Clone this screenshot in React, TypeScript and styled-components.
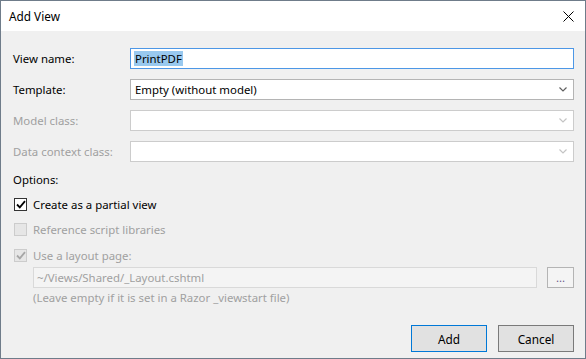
import React from 'react'
import styled, { createGlobalStyle } from 'styled-components'

const GlobalStyle = createGlobalStyle`
  html, body {
    margin: 0;
    padding: 0;
    background: #ffffff;
  }
  * {
    box-sizing: border-box;
  }
`

const Window = styled.div`
  width: 586px;
  height: 359px;
  border: 1px solid #6f7c8a;
  display: flex;
  flex-direction: column;
  background: #f0f0f0;
  font-family: "Segoe UI", "Noto Sans", "Open Sans", sans-serif;
  font-size: 11.4px;
  color: #000;
  overflow: hidden;
`

const TitleBar = styled.div`
  height: 30px;
  background: #ffffff;
  display: flex;
  align-items: center;
  justify-content: space-between;
  padding: 0 11px 0 8px;
  flex-shrink: 0;
`

const Title = styled.span`
  font-size: 11.8px;
  line-height: 16px;
`

const CloseButton = styled.svg`
  width: 11px;
  height: 11px;
`

const Body = styled.div`
  flex: 1;
  display: flex;
  flex-direction: column;
  padding: 17px 11px 6px 12px;
`

const FieldGrid = styled.div`
  display: grid;
  grid-template-columns: 117px 1fr;
  row-gap: 10px;
  align-items: center;
`

const Label = styled.label<{ $disabled?: boolean }>`
  color: ${p => (p.$disabled ? '#a0a0a0' : '#000')};
  line-height: 16px;
`

const TextBox = styled.div<{ $focused?: boolean }>`
  height: 21px;
  border: 1px solid ${p => (p.$focused ? '#4d97e6' : '#b9b9b9')};
  background: #fff;
  display: flex;
  align-items: center;
  padding-left: 3px;
`

const Selected = styled.span`
  background: #99c9ef;
  color: #000;
  line-height: 15px;
  padding: 0 1px;
`

const Combo = styled.div<{ $disabled?: boolean }>`
  height: 21px;
  border: 1px solid ${p => (p.$disabled ? '#cccccc' : '#b4b4b4')};
  background: #fff;
  display: flex;
  align-items: center;
  justify-content: space-between;
  padding: 0 6px 0 4px;
`

const Chevron = styled.svg`
  width: 8px;
  height: 5px;
`

const SectionLabel = styled.div`
  margin-top: 10px;
  line-height: 16px;
`

const CheckRow = styled.div<{ $disabled?: boolean; $gap: number }>`
  display: flex;
  align-items: center;
  gap: 6px;
  margin-top: ${p => p.$gap}px;
  padding-left: 1px;
  height: 16px;
  color: ${p => (p.$disabled ? '#a0a0a0' : '#000')};
`

const Box = styled.span<{ $disabled?: boolean }>`
  width: 13px;
  height: 13px;
  border: 1px solid ${p => (p.$disabled ? '#cccccc' : '#333333')};
  background: ${p => (p.$disabled ? '#e6e6e6' : '#ffffff')};
  display: flex;
  align-items: center;
  justify-content: center;
`

const PathRow = styled.div`
  display: flex;
  align-items: center;
  gap: 10px;
  margin-top: 4px;
  padding-left: 20px;
`

const PathBox = styled.div`
  flex: 1;
  height: 21px;
  border: 1px solid #d9d9d9;
  background: #f4f4f4;
  color: #a0a0a0;
  display: flex;
  align-items: center;
  padding-left: 3px;
`

const BrowseButton = styled.div`
  width: 27px;
  height: 21px;
  border: 1px solid #b4b4b4;
  background: #f4f4f4;
  color: #6d5a8a;
  display: flex;
  align-items: flex-end;
  justify-content: center;
  padding-bottom: 4px;
  line-height: 10px;
`

const Hint = styled.div`
  color: #a0a0a0;
  padding-left: 20px;
  margin-top: 2px;
  line-height: 16px;
`

const Footer = styled.div`
  margin-top: auto;
  display: flex;
  justify-content: flex-end;
  gap: 11px;
`

const Button = styled.button<{ $primary?: boolean }>`
  width: 76px;
  height: 27px;
  font: inherit;
  font-size: 11.8px;
  color: #000;
  background: #e1e1e1;
  border: 1px solid ${p => (p.$primary ? '#0078d7' : '#7a7a7a')};
  padding: 0;
`

const Check = ({ color }: { color: string }) => (
  <svg width="10" height="9" viewBox="0 0 10 9">
    <path d="M1 4.5 L3.8 7.3 L9 1.2" fill="none" stroke={color} strokeWidth="1.8" />
  </svg>
)

const ChevronDown = ({ color }: { color: string }) => (
  <Chevron viewBox="0 0 8 5">
    <path d="M0.5 0.5 L4 4 L7.5 0.5" fill="none" stroke={color} strokeWidth="1.2" />
  </Chevron>
)

export default function App() {
  return (
    <>
      <GlobalStyle />
      <Window>
        <TitleBar>
          <Title>Add View</Title>
          <CloseButton viewBox="0 0 11 11">
            <path d="M0.5 0.5 L10.5 10.5 M10.5 0.5 L0.5 10.5" stroke="#000" strokeWidth="1" />
          </CloseButton>
        </TitleBar>
        <Body>
          <FieldGrid>
            <Label>View name:</Label>
            <TextBox $focused>
              <Selected>PrintPDF</Selected>
            </TextBox>
            <Label>Template:</Label>
            <Combo>
              <span>Empty (without model)</span>
              <ChevronDown color="#606060" />
            </Combo>
            <Label $disabled>Model class:</Label>
            <Combo $disabled>
              <span />
              <ChevronDown color="#c4c4c4" />
            </Combo>
            <Label $disabled>Data context class:</Label>
            <Combo $disabled>
              <span />
              <ChevronDown color="#c4c4c4" />
            </Combo>
          </FieldGrid>
          <SectionLabel>Options:</SectionLabel>
          <CheckRow $gap={8}>
            <Box>
              <Check color="#000" />
            </Box>
            Create as a partial view
          </CheckRow>
          <CheckRow $disabled $gap={9}>
            <Box $disabled />
            Reference script libraries
          </CheckRow>
          <CheckRow $disabled $gap={10}>
            <Box $disabled>
              <Check color="#a6a6a6" />
            </Box>
            Use a layout page:
          </CheckRow>
          <PathRow>
            <PathBox>~/Views/Shared/_Layout.cshtml</PathBox>
            <BrowseButton>...</BrowseButton>
          </PathRow>
          <Hint>(Leave empty if it is set in a Razor _viewstart file)</Hint>
          <Footer>
            <Button $primary>Add</Button>
            <Button>Cancel</Button>
          </Footer>
        </Body>
      </Window>
    </>
  )
}
